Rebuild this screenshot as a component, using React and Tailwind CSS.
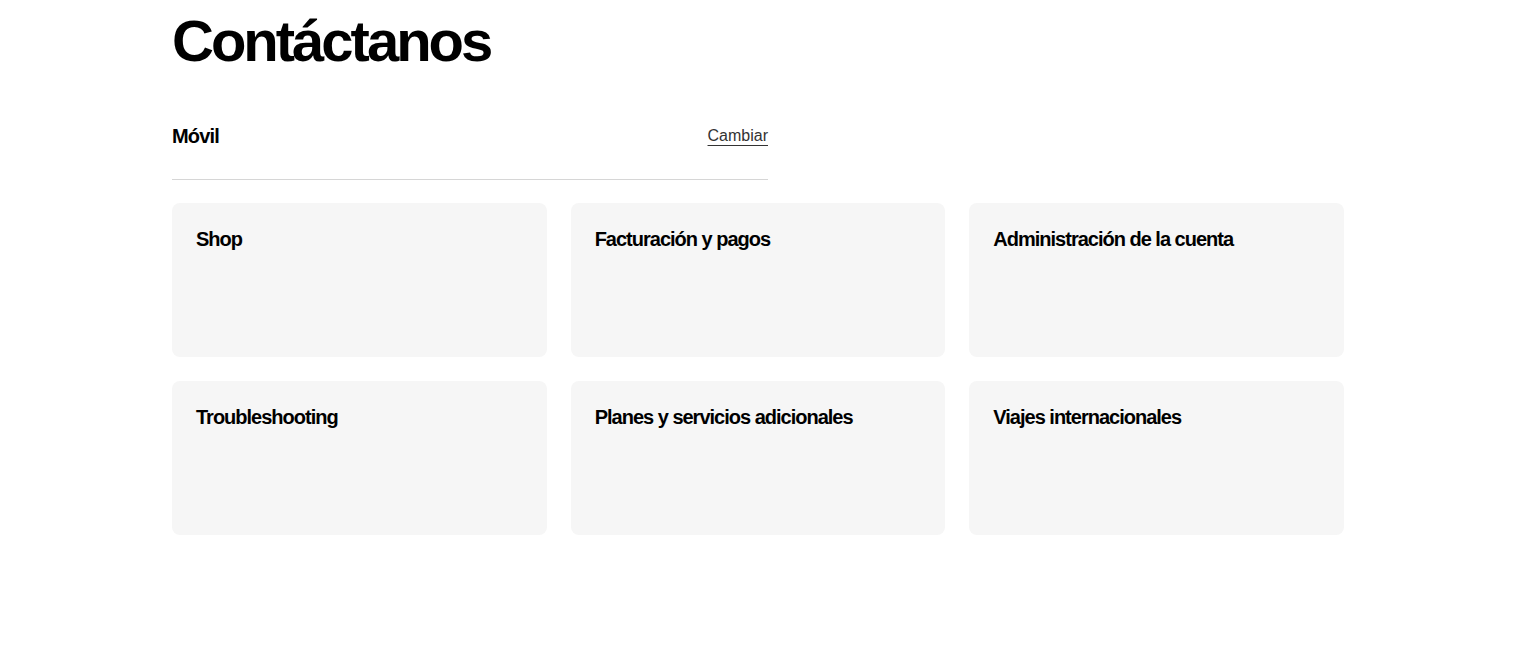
import React from 'react';

const topics = [
    'Shop',
    'Facturación y pagos',
    'Administración de la cuenta',
    'Troubleshooting',
    'Planes y servicios adicionales',
    'Viajes internacionales',
];

function TopicCard({ title }) {
    return (
        <a href="#" className="block h-[154px] rounded-lg bg-[#f6f6f6] px-6 pt-6">
            <h3 className="text-[20px] leading-6 font-bold tracking-[-1px] text-black">{title}</h3>
        </a>
    );
}

export default function App() {
    return (
        <div className="min-h-screen bg-white font-['Liberation_Sans',Arial,sans-serif] text-black">
            <div className="ml-[172px] w-[1172px]">
                <h1 className="pt-[9px] text-[58px] leading-[64px] font-bold tracking-[-3px]">Contáctanos</h1>

                {/* Line selector */}
                <div className="mt-[51px] w-[596px] border-b border-[#d6d6d6] pb-[31px]">
                    <div className="flex items-center justify-between">
                        <span className="text-[20px] leading-6 font-bold tracking-[-0.8px]">Móvil</span>
                        <a href="#" className="text-[16px] leading-5 text-[#333] underline underline-offset-[4px] decoration-1">Cambiar</a>
                    </div>
                </div>

                {/* Topic cards */}
                <div className="mt-[23px] grid grid-cols-3 gap-6">
                    {topics.map((t) => (
                        <TopicCard key={t} title={t} />
                    ))}
                </div>
            </div>
        </div>
    );
}
